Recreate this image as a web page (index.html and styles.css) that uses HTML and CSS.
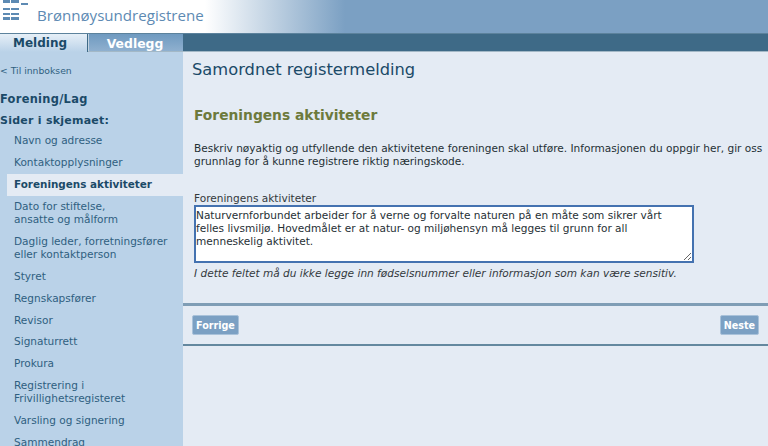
FILE: index.html
```html
<!DOCTYPE html>
<html lang="en">
<head>
  <meta charset="UTF-8" />
  <title>Samordnet registermelding</title>
  <link rel="stylesheet" href="styles.css">
</head>
<body>
  <header class="site-header">
    <svg class="logo-mark" width="29" height="21" viewBox="0 0 29 21" aria-hidden="true">
      <path d="M3 0h7v3H3zM11 0h8v3h-8zM21 3h7v2h-7zM3 8h7v2H3zM11 8h8v2h-8zM3 13h7v2H3zM11 13h8v2h-8zM3 17h7v3H3zM11 17h8v3h-8z" fill="#5d8ab3"/>
    </svg>
    <span class="logo-text">Brønnøysundregistrene</span>
  </header>

  <nav class="tabs">
    <a class="tab tab-active" href="#">Melding</a>
    <a class="tab" href="#">Vedlegg</a>
  </nav>

  <div class="layout">
    <aside class="sidebar">
      <a class="back-link" href="#">&lt; Til innboksen</a>
      <h2 class="side-title">Forening/Lag</h2>
      <h3 class="side-subtitle">Sider i skjemaet:</h3>
      <ul class="side-links">
        <li><a href="#">Navn og adresse</a></li>
        <li><a href="#">Kontaktopplysninger</a></li>
        <li class="current"><a href="#">Foreningens aktiviteter</a></li>
        <li><a href="#">Dato for stiftelse,<br>ansatte og målform</a></li>
        <li><a href="#">Daglig leder, forretningsfører<br>eller kontaktperson</a></li>
        <li><a href="#">Styret</a></li>
        <li><a href="#">Regnskapsfører</a></li>
        <li><a href="#">Revisor</a></li>
        <li><a href="#">Signaturrett</a></li>
        <li><a href="#">Prokura</a></li>
        <li><a href="#">Registrering i<br>Frivillighetsregisteret</a></li>
        <li><a href="#">Varsling og signering</a></li>
        <li><a href="#">Sammendrag</a></li>
      </ul>
    </aside>

    <main class="content">
      <h1 class="page-title">Samordnet registermelding</h1>
      <div class="form-body">
        <h2 class="section-title">Foreningens aktiviteter</h2>
        <p class="intro">Beskriv nøyaktig og utfyllende den aktivitetene foreningen skal utføre. Informasjonen du oppgir her, gir oss grunnlag for å kunne registrere riktig næringskode.</p>
        <label class="field-label" for="aktiviteter">Foreningens aktiviteter</label>
        <textarea class="field-input" id="aktiviteter">Naturvernforbundet arbeider for å verne og forvalte naturen på en måte som sikrer vårt felles livsmiljø. Hovedmålet er at natur- og miljøhensyn må legges til grunn for all menneskelig aktivitet.</textarea>
        <p class="field-note">I dette feltet må du ikke legge inn fødselsnummer eller informasjon som kan være sensitiv.</p>
      </div>
      <div class="button-bar">
        <button class="nav-btn" type="button">Forrige</button>
        <button class="nav-btn" type="button">Neste</button>
      </div>
    </main>
  </div>
</body>
</html>
```

FILE: styles.css
```css
* {
  box-sizing: border-box;
  margin: 0;
  padding: 0;
}

html,
body {
  height: 446px;
  overflow: hidden;
}

body {
  font-family: "DejaVu Sans", Verdana, sans-serif;
  font-size: 10.55px;
  line-height: 13px;
  background: #e4ebf4;
  color: #1f3f57;
}

a {
  color: inherit;
  text-decoration: none;
}

/* Header */
.site-header {
  height: 33px;
  background: linear-gradient(to right, #fff 205px, #7ba0c3 345px);
  display: flex;
  align-items: flex-start;
  overflow: hidden;
}

.logo-mark {
  flex: none;
}

.logo-text {
  margin: 6px 0 0 8px;
  font-family: "Open Sans", sans-serif;
  font-size: 15.1px;
  line-height: 19px;
  color: #5d8ab3;
}

/* Tabs */
.tabs {
  height: 19px;
  background: #3e6a87;
  display: flex;
  border-top: 1px solid #5c829c;
  border-bottom: 1px solid #a3b8c6;
}

.tab {
  width: 95px;
  padding: 1px 2px 0 0;
  font-weight: bold;
  font-size: 12.4px;
  line-height: 17px;
  text-align: center;
  color: #fff;
  background: linear-gradient(#6f9ac0, #8fb0cf);
  border-left: 1px solid #c3d4e2;
}

.tab-active {
  width: 88px;
  height: 18px;
  padding-right: 7px;
  font-size: 12px;
  color: #1b4a68;
  background: linear-gradient(#e6eff7, #bad2e8);
  border-left: none;
  border-right: 1px solid #3e6a87;
}

/* Sidebar */
.layout {
  display: flex;
  height: 394px;
}

.sidebar {
  flex: none;
  width: 183px;
  background: #bad2e8;
  overflow: hidden;
}

.back-link {
  display: block;
  margin-top: 12px;
  font-size: 9.25px;
  color: #2f5f80;
}

.side-title,
.side-subtitle {
  font-weight: bold;
  color: #1b4a68;
}

.side-title {
  margin-top: 16px;
  font-size: 11.4px;
  letter-spacing: 0.3px;
}

.side-subtitle {
  margin-top: 8px;
  font-size: 11px;
  letter-spacing: 0.25px;
}

.side-links {
  list-style: none;
  margin: 3px 0 0 7px;
}

.side-links li {
  padding: 4.45px 0 4.45px 7px;
  color: #2f5f80;
}

.side-links .current {
  background: #e4ebf4;
  font-size: 10.4px;
  font-weight: bold;
  color: #1b4a68;
}

/* Main content */
.content {
  flex: 1;
  min-width: 0;
}

.page-title {
  font-size: 16.3px;
  font-weight: normal;
  line-height: 20px;
  color: #1b4a68;
  margin: 8px 0 0 9px;
}

.form-body {
  height: 226px;
  padding: 26px 0 0 11px;
  border-bottom: 3px solid;
  border-image: linear-gradient(#fff 0 50%, #7f9db5 50% 100%) 3;
}

.section-title {
  font-size: 13.8px;
  line-height: 18px;
  color: #6d7a3c;
}

.intro {
  margin-top: 18px;
  color: #1f3035;
}

.field-label {
  display: block;
  margin-top: 24px;
  color: #33393c;
}

.field-input {
  display: block;
  width: 500px;
  height: 58px;
  padding: 2px 0;
  border: 2px solid #4472b0;
  background: #fff;
  color: #1f3035;
  font-family: inherit;
  font-size: 10.55px;
  line-height: 13px;
  overflow: hidden;
}

.field-note {
  margin-top: 4px;
  font-style: italic;
  color: #33393c;
}

.button-bar {
  display: flex;
  justify-content: space-between;
  align-items: flex-start;
  height: 40px;
  padding: 9px 9px 0;
  border-bottom: 2px solid #64889f;
}

.nav-btn {
  height: 20px;
  padding: 0 3px;
  border: 1px solid #a9c2da;
  border-radius: 2px;
  background: #7ba0c3;
  color: #fff;
  font-family: inherit;
  font-size: 9.6px;
  font-weight: bold;
}
```
